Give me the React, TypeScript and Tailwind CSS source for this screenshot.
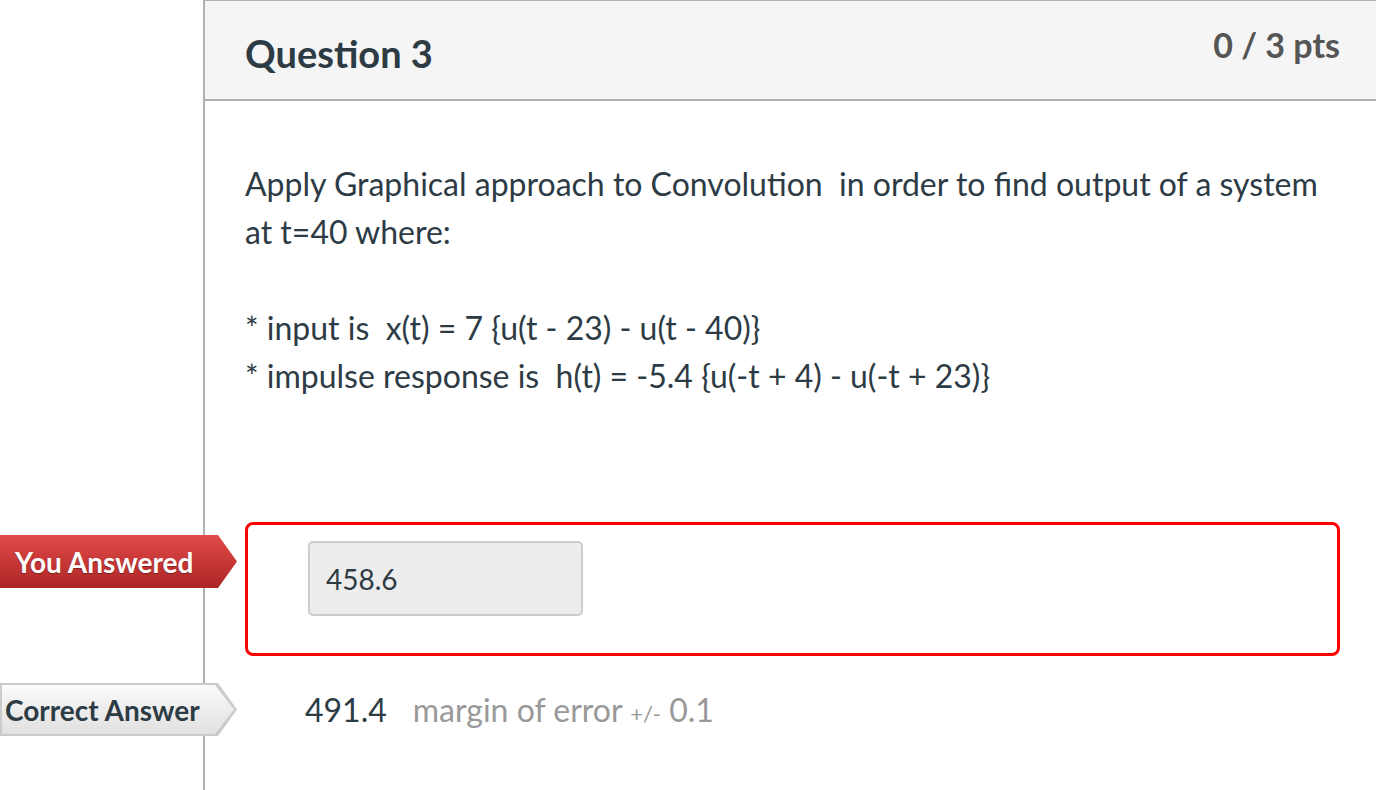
export default function App() {
  return (
    <div className="min-h-screen bg-white flex overflow-hidden font-[Lato,'Noto_Sans',sans-serif] text-[#2d3b45]">
      {/* Left gutter */}
      <div className="w-[203px] shrink-0" />

      {/* Question panel */}
      <div className="flex-1 min-h-[790px] border-l-2 border-t border-[#b1b1b1]">
        {/* Header */}
        <div className="h-[100px] bg-[#f5f5f5] border-b-2 border-[#b1b1b1] flex justify-between pl-[40px] pr-[36px]">
          <h2 className="pt-[33px] text-[38px] leading-[38px] font-bold text-[#2d3b45]">Question 3</h2>
          <div className="pt-[27px] text-[34px] leading-[34px] font-bold text-[#555555]">0 / 3 pts</div>
        </div>

        {/* Body */}
        <div className="pl-[40px] pr-[36px] pt-[59px] text-[32px] leading-[48px]">
          <p className="mb-[48px]">
            Apply Graphical approach to Convolution&nbsp; in order to find output of a system at t=40 where:
          </p>
          <p>* input is&nbsp; x(t) = 7 {'{'}u(t - 23) - u(t - 40){'}'}</p>
          <p>* impulse response is&nbsp; h(t) = -5.4 {'{'}u(-t + 4) - u(-t + 23){'}'}</p>

          {/* Your answer */}
          <div className="relative mt-[122px] h-[134px] border-[3px] border-[#ff0000] rounded-[8px] pt-[16px] pl-[60px]">
            <div className="absolute left-[-248px] top-[10px] w-[237px] h-[53px] [clip-path:polygon(0_0,218px_0,237px_50%,218px_100%,0_100%)] bg-gradient-to-b from-[#e24a4a] to-[#ad2525] flex items-center pl-[15px]">
              <span className="text-[28px] leading-none font-bold text-white [text-shadow:0_1px_1px_rgba(0,0,0,0.35)]">
                You Answered
              </span>
            </div>
            <div className="w-[275px] h-[75px] bg-[#ededed] border-2 border-[#cccccc] rounded-[5px] pl-[16px] flex items-center text-[28px] leading-none text-[#2d3b45]">
              458.6
            </div>
          </div>

          {/* Correct answer */}
          <div className="relative mt-[27px] h-[53px] flex items-center pl-[60px]">
            <div className="absolute left-[-245px] top-0 w-[237px] h-[53px] [clip-path:polygon(0_0,218px_0,237px_50%,218px_100%,0_100%)] bg-[#cbcbcb] p-[2px] pr-[3px]">
              <div className="w-full h-full [clip-path:polygon(0_0,calc(100%-19px)_0,100%_50%,calc(100%-19px)_100%,0_100%)] bg-gradient-to-b from-[#fafafa] to-[#e1e1e1] flex items-center pl-[3px]">
                <span className="text-[28px] leading-none font-bold text-[#2d3b45]">Correct Answer</span>
              </div>
            </div>
            <span className="text-[32px] leading-none">491.4</span>
            <span className="ml-[26px] text-[32px] leading-none text-[#999999]">
              margin of error <span className="text-[22px]">+/-</span> 0.1
            </span>
          </div>
        </div>
      </div>
    </div>
  );
}
